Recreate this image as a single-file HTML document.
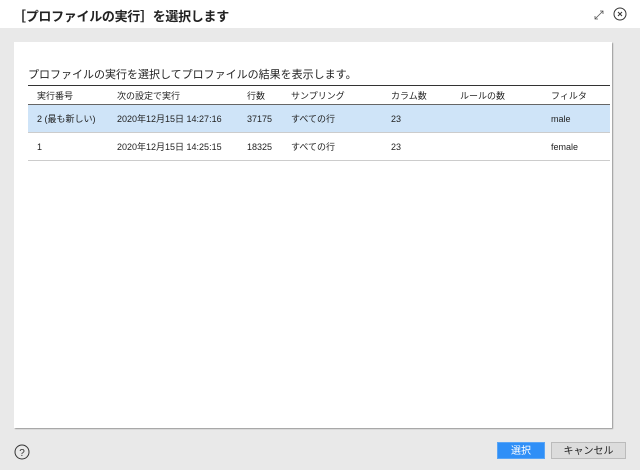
<!DOCTYPE html>
<html><head><meta charset="utf-8"><style>
*{margin:0;padding:0;box-sizing:border-box}
body{width:640px;height:470px;background:#e9e9e9;font-family:"Liberation Sans","Noto Sans CJK JP",sans-serif;position:relative;overflow:hidden;color:#222}
.title{position:absolute;left:0;top:0;width:640px;height:28px;background:#fff;font-size:13px;font-weight:bold;padding:6px 0 0 13px;color:#222;letter-spacing:-0.3px}
.panel{position:absolute;left:14px;top:42px;width:598px;height:386px;background:#fff;box-shadow:1px 1px 1px #999}
.desc{position:absolute;left:28px;top:66px;font-size:11px}
table{position:absolute;left:28px;top:85px;width:582px;border-collapse:collapse;font-size:9px}
thead tr{border-top:1px solid #333;border-bottom:1px solid #666;height:19px}
tbody tr{height:28px;border-bottom:1px solid #ccc}
tr.sel{background:#cfe4f8}
td{padding-left:9px;white-space:nowrap}
.btn{position:absolute;top:442px;height:17px;font-size:10px;text-align:center;line-height:17px}
</style></head><body>
<div class="title">［プロファイルの実行］を選択します</div>
<svg style="position:absolute;left:593px;top:7px" width="40" height="16"><path d="M2 12 L10 4 M7 4 H10 V7 M2 9 V12 H5" stroke="#555" fill="none" stroke-width="0.8"/><circle cx="27" cy="7" r="6" stroke="#333" fill="none"/><path d="M25 5 L29 9 M29 5 L25 9" stroke="#333"/></svg>
<div class="panel"></div>
<div class="desc">プロファイルの実行を選択してプロファイルの結果を表示します。</div>
<table>
<colgroup><col style="width:80px"><col style="width:130px"><col style="width:44px"><col style="width:100px"><col style="width:69px"><col style="width:91px"><col></colgroup>
<thead><tr><td>実行番号</td><td>次の設定で実行</td><td>行数</td><td>サンプリング</td><td>カラム数</td><td>ルールの数</td><td>フィルタ</td></tr></thead>
<tbody>
<tr class="sel"><td>2 (最も新しい)</td><td>2020年12月15日 14:27:16</td><td>37175</td><td>すべての行</td><td>23</td><td></td><td>male</td></tr>
<tr><td>1</td><td>2020年12月15日 14:25:15</td><td>18325</td><td>すべての行</td><td>23</td><td></td><td>female</td></tr>
</tbody></table>
<svg style="position:absolute;left:14px;top:444px" width="18" height="18"><circle cx="8" cy="8" r="7" stroke="#333" fill="none"/><text x="8" y="12" font-size="10" text-anchor="middle" fill="#333" font-family="Liberation Sans">?</text></svg>
<div class="btn" style="left:497px;width:48px;background:#2f8ff7;color:#fff;border:1px solid #5aa5f5">選択</div>
<div class="btn" style="left:551px;width:75px;background:#dcdcdc;border:1px solid #bbb;color:#222">キャンセル</div>
</body></html>
